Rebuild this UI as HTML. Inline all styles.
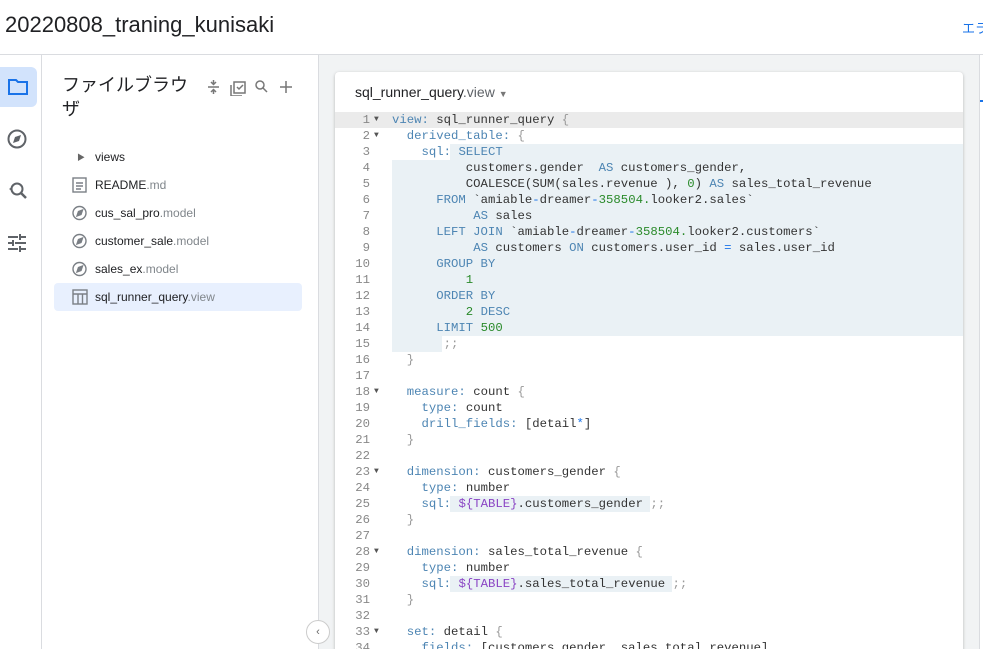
<!DOCTYPE html>
<html><head><meta charset="utf-8"><style>
*{margin:0;padding:0;box-sizing:border-box}
html,body{width:983px;height:649px;overflow:hidden}
body{background:#fff;font-family:"Liberation Sans","Noto Sans CJK JP",sans-serif;position:relative;color:#222}
.abs{position:absolute}
.title{left:5px;top:12px;font-size:22px;color:#202124}
.topr{left:962px;top:18px;font-size:13px;color:#1a73e8;white-space:nowrap}
.hline{left:0;top:54px;width:983px;height:1px;background:#dadce0}
.rail{left:41px;top:55px;width:1px;height:594px;background:#dadce0}
.fp{left:318px;top:55px;width:1px;height:594px;background:#dadce0}
.grey{left:319px;top:55px;width:661px;height:594px;background:#f1f3f4}
.rb{left:979px;top:55px;width:1px;height:594px;background:#dadce0}
.card{left:335px;top:72px;width:628px;height:590px;background:#fff;border-radius:4px;box-shadow:0 1px 3px rgba(0,0,0,.25)}
.ctitle{left:355px;top:84px;font-size:14px;color:#202124}
.ctitle span{color:#5f6368}
.ft{left:62px;top:73px;font-size:18px;line-height:24px;color:#202124;width:130px}
.item{left:54px;width:248px;height:28px;font-size:12px;color:#202124;line-height:28px;padding-left:41px}
.item span{color:#80868b}
.sel{background:#e8f0fe}
.code{left:335px;top:112px;width:628px;font-family:"Liberation Mono",monospace;font-size:12.3px}
.l{height:16px;line-height:16px;position:relative;white-space:pre;color:#333}
.n{position:absolute;left:0;width:35px;text-align:right;color:#888}
.ar{position:absolute;left:39px;top:0;font-size:8px;color:#555}
.t{position:absolute;left:57px}
.k{color:#4d85b3}.q{color:#4d85b3}.g{color:#2a8a2a}.p{color:#8a44c4}.b{color:#999}.s{color:#1a73e8}
.hl{background:#eaf1f5;position:absolute}
</style></head><body>
<div class="abs title">20220808_traning_kunisaki</div>
<div class="abs topr">エラ</div>
<div class="abs hline"></div>
<div class="abs rail"></div>
<div class="abs grey"></div>
<div class="abs fp"></div>
<div class="abs rb"></div>
<div class="abs" style="left:980px;top:100px;width:3px;height:2px;background:#1a73e8"></div>
<div class="abs" style="left:0;top:67px;width:37px;height:40px;background:#d2e3fc;border-radius:0 6px 6px 0"></div>
<svg class="abs" style="left:7px;top:77px" width="22" height="20" viewBox="0 0 22 20"><path d="M2 3h7l2 2h9v12H2z" fill="none" stroke="#1a73e8" stroke-width="2"/></svg>
<svg class="abs" style="left:6px;top:128px" width="22" height="22" viewBox="0 0 22 22"><circle cx="11" cy="11" r="8.5" fill="none" stroke="#5f6368" stroke-width="2"/><path d="M7 15l2-6 6-2-2 6z" fill="#5f6368"/></svg>
<svg class="abs" style="left:6px;top:180px" width="22" height="22" viewBox="0 0 22 22"><circle cx="11" cy="9" r="5.5" fill="none" stroke="#5f6368" stroke-width="2"/><path d="M15 13l5 5" stroke="#5f6368" stroke-width="2.5"/><path d="M3 9l3-2v4z" fill="#5f6368"/></svg>
<svg class="abs" style="left:7px;top:233px" width="20" height="20" viewBox="0 0 20 20" stroke="#5f6368" stroke-width="2"><path d="M1 4h10M14 4h5M13 1v6M1 10h4M8 10h11M6 7v6M1 16h10M14 16h5M13 13v6"/></svg>
<div class="abs ft">ファイルブラウザ</div>
<svg class="abs" style="left:206px;top:78px" width="90" height="18" viewBox="0 0 90 18" fill="none" stroke="#777" stroke-width="1.5"><path d="M2 9h11M7.5 2v4M5 4l2.5 2.5L10 4M7.5 16v-4M5 14l2.5-2.5L10 14"/><rect x="28" y="4" width="11" height="11"/><path d="M25 7v11h11M31 9l2 2 4-4"/><circle cx="54" cy="7" r="4"/><path d="M57 10l4 4"/><path d="M80 3v12M74 9h12"/></svg>
<div class="abs" style="left:77px;top:152px;font-size:8px;color:#666">▶</div>
<div class="abs item" style="top:143px">views</div>
<div class="abs item" style="top:171px">README<span>.md</span></div>
<div class="abs item" style="top:199px">cus_sal_pro<span>.model</span></div>
<div class="abs item" style="top:227px">customer_sale<span>.model</span></div>
<div class="abs item" style="top:255px">sales_ex<span>.model</span></div>
<div class="abs item sel" style="top:283px;border-radius:4px">sql_runner_query<span>.view</span></div>
<svg class="abs" style="left:71px;top:176px" width="18" height="110" viewBox="0 0 18 110" fill="none" stroke="#7a7f85" stroke-width="1.4"><rect x="2" y="2" width="13" height="14"/><path d="M5 7h7M5 10h7M5 13h5"/><circle cx="8.5" cy="37" r="6.5"/><path d="M6 40l1.5-4.5 4-1.5-1.5 4.5z" fill="#7a7f85"/><circle cx="8.5" cy="65" r="6.5"/><path d="M6 68l1.5-4.5 4-1.5-1.5 4.5z" fill="#7a7f85"/><circle cx="8.5" cy="93" r="6.5"/><path d="M6 96l1.5-4.5 4-1.5-1.5 4.5z" fill="#7a7f85"/></svg>
<svg class="abs" style="left:71px;top:288px" width="18" height="18" viewBox="0 0 18 18" fill="none" stroke="#7a7f85" stroke-width="1.4"><rect x="2" y="2" width="14" height="14"/><path d="M2 6h14M7 6v10M11.5 6v10"/></svg>
<div class="abs card"></div>
<div class="abs ctitle">sql_runner_query<span>.view</span> <span style="font-size:9px;color:#777">▼</span></div>
<div class="abs" style="left:335px;top:112px;width:628px;height:16px;background:#ebebeb"></div>
<div class="abs hl" style="left:450px;top:144px;width:513px;height:16px"></div>
<div class="abs hl" style="left:392px;top:160px;width:571px;height:176px"></div>
<div class="abs hl" style="left:392px;top:336px;width:50px;height:16px"></div>
<div class="abs hl" style="left:450px;top:496px;width:200px;height:16px"></div>
<div class="abs hl" style="left:450px;top:576px;width:222px;height:16px"></div>
<div class="abs code">
<div class="l"><span class="n">1</span><span class="ar">▼</span><span class="t"><span class="k">view:</span> sql_runner_query <span class="b">{</span></span></div>
<div class="l"><span class="n">2</span><span class="ar">▼</span><span class="t">  <span class="k">derived_table:</span> <span class="b">{</span></span></div>
<div class="l"><span class="n">3</span><span class="t">    <span class="k">sql:</span> <span class="q">SELECT</span></span></div>
<div class="l"><span class="n">4</span><span class="t">          customers.gender  <span class="q">AS</span> customers_gender,</span></div>
<div class="l"><span class="n">5</span><span class="t">          COALESCE(SUM(sales.revenue ), <span class="g">0</span>) <span class="q">AS</span> sales_total_revenue</span></div>
<div class="l"><span class="n">6</span><span class="t">      <span class="q">FROM</span> `amiable<span class="s">-</span>dreamer<span class="s">-</span><span class="g">358504.</span>looker2.sales`</span></div>
<div class="l"><span class="n">7</span><span class="t">           <span class="q">AS</span> sales</span></div>
<div class="l"><span class="n">8</span><span class="t">      <span class="q">LEFT JOIN</span> `amiable<span class="s">-</span>dreamer<span class="s">-</span><span class="g">358504.</span>looker2.customers`</span></div>
<div class="l"><span class="n">9</span><span class="t">           <span class="q">AS</span> customers <span class="q">ON</span> customers.user_id <span class="s">=</span> sales.user_id</span></div>
<div class="l"><span class="n">10</span><span class="t">      <span class="q">GROUP BY</span></span></div>
<div class="l"><span class="n">11</span><span class="t">          <span class="g">1</span></span></div>
<div class="l"><span class="n">12</span><span class="t">      <span class="q">ORDER BY</span></span></div>
<div class="l"><span class="n">13</span><span class="t">          <span class="g">2</span> <span class="q">DESC</span></span></div>
<div class="l"><span class="n">14</span><span class="t">      <span class="q">LIMIT</span> <span class="g">500</span></span></div>
<div class="l"><span class="n">15</span><span class="t">       <span class="b">;;</span></span></div>
<div class="l"><span class="n">16</span><span class="t">  <span class="b">}</span></span></div>
<div class="l"><span class="n">17</span></div>
<div class="l"><span class="n">18</span><span class="ar">▼</span><span class="t">  <span class="k">measure:</span> count <span class="b">{</span></span></div>
<div class="l"><span class="n">19</span><span class="t">    <span class="k">type:</span> count</span></div>
<div class="l"><span class="n">20</span><span class="t">    <span class="k">drill_fields:</span> [detail<span class="s">*</span>]</span></div>
<div class="l"><span class="n">21</span><span class="t">  <span class="b">}</span></span></div>
<div class="l"><span class="n">22</span></div>
<div class="l"><span class="n">23</span><span class="ar">▼</span><span class="t">  <span class="k">dimension:</span> customers_gender <span class="b">{</span></span></div>
<div class="l"><span class="n">24</span><span class="t">    <span class="k">type:</span> number</span></div>
<div class="l"><span class="n">25</span><span class="t">    <span class="k">sql:</span> <span class="p">${TABLE}</span>.customers_gender <span class="b">;;</span></span></div>
<div class="l"><span class="n">26</span><span class="t">  <span class="b">}</span></span></div>
<div class="l"><span class="n">27</span></div>
<div class="l"><span class="n">28</span><span class="ar">▼</span><span class="t">  <span class="k">dimension:</span> sales_total_revenue <span class="b">{</span></span></div>
<div class="l"><span class="n">29</span><span class="t">    <span class="k">type:</span> number</span></div>
<div class="l"><span class="n">30</span><span class="t">    <span class="k">sql:</span> <span class="p">${TABLE}</span>.sales_total_revenue <span class="b">;;</span></span></div>
<div class="l"><span class="n">31</span><span class="t">  <span class="b">}</span></span></div>
<div class="l"><span class="n">32</span></div>
<div class="l"><span class="n">33</span><span class="ar">▼</span><span class="t">  <span class="k">set:</span> detail <span class="b">{</span></span></div>
<div class="l"><span class="n">34</span><span class="t">    <span class="k">fields:</span> [customers_gender, sales_total_revenue]</span></div>
</div>
<div class="abs" style="left:306px;top:620px;width:24px;height:24px;border:1px solid #ccc;border-radius:50%;background:#fff;font-size:11px;color:#666;text-align:center;line-height:22px">‹</div>
</body></html>
